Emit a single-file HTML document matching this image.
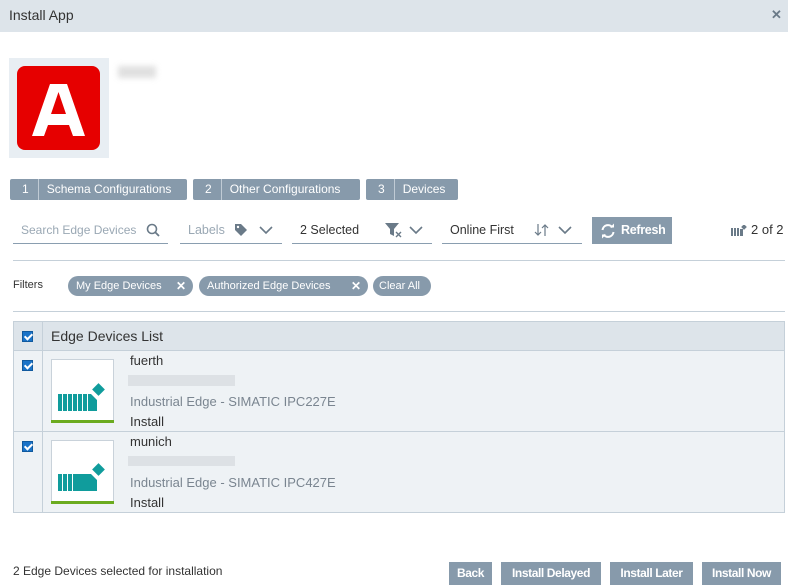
<!DOCTYPE html>
<html><head><style>
*{box-sizing:border-box;margin:0;padding:0}
body{width:788px;height:588px;background:#fff;font-family:"Liberation Sans",sans-serif;color:#333;position:relative;overflow:hidden;font-size:13px}
.a{position:absolute;white-space:nowrap}
.hdr{left:0;top:0;width:788px;height:32px;background:#dde4ea}
.step{top:179px;height:21px;background:#879aab;color:#fff;font-size:12px;line-height:21px;border-radius:2px;display:flex}
.step span.n{padding:0 9px 0 12px;border-right:1px solid #c0cbd5}
.step span.t{padding:0 8px}
.ul{border-bottom:1px solid #8a9eb0;height:27px;top:217px;font-size:12.5px;line-height:27px}
.chip{top:276px;height:20px;background:#879aab;color:#fff;border-radius:10px;font-size:11px;line-height:20px;padding:0 8px}
.chip b{position:absolute;right:7px;top:0;font-size:12px}
.btn{top:562px;height:23px;background:#879aab;color:#fff;font-weight:bold;font-size:12px;line-height:23px;text-align:center;letter-spacing:-0.4px}
.cb{width:11px;height:11px;background:#1a73c8;border:1px solid #10599e}
.cb:after{content:"";position:absolute;left:3px;top:0px;width:3px;height:6px;border:solid #fff;border-width:0 2px 2px 0;transform:rotate(45deg)}
.img{width:63px;height:64px;background:#fff;border:1px solid #c9d2da;border-bottom:none}
</style></head><body>
<div class="a hdr"></div>
<div class="a" style="left:9px;top:7px;font-size:14px;color:#333">Install App</div>
<div class="a" style="left:771px;top:7px;font-size:13px;font-weight:bold;color:#6a7a88">✕</div>

<div class="a" style="left:9px;top:58px;width:100px;height:100px;background:#e8eef3"></div>
<div class="a" style="left:17px;top:66px;width:83px;height:84px;background:#e60000;border-radius:8px"></div>
<svg class="a" style="left:17px;top:66px" width="83" height="84"><path d="M33 18 H50 L68 70 H56 L52 59 H31 L27 70 H15 Z M34 48 H49 L41.5 26 Z" fill="#fff" fill-rule="evenodd"/></svg>
<div class="a" style="left:118px;top:66px;width:38px;height:12px;background:#d8d8d8;filter:blur(3px);opacity:.8"></div>

<div class="a step" style="left:10px;width:177px"><span class="n">1</span><span class="t">Schema Configurations</span></div>
<div class="a step" style="left:193px;width:167px"><span class="n">2</span><span class="t">Other Configurations</span></div>
<div class="a step" style="left:366px;width:92px"><span class="n">3</span><span class="t">Devices</span></div>

<div class="a ul" style="left:13px;width:155px;color:#9aa8b4;padding-left:8px;font-size:12px">Search Edge Devices</div>
<svg class="a" style="left:146px;top:223px" width="14" height="14"><circle cx="6" cy="6" r="4.5" stroke="#6a7a88" stroke-width="1.6" fill="none"/><path d="M9.5 9.5 L13 13" stroke="#6a7a88" stroke-width="1.8"/></svg>
<div class="a ul" style="left:180px;width:102px;color:#9aa8b4;padding-left:8px">Labels</div>
<svg class="a" style="left:234px;top:223px" width="14" height="14"><path d="M1 1 H7 L13 7 L7 13 L1 7 Z" fill="#6a7a88"/><circle cx="4" cy="4" r="1.2" fill="#fff"/></svg>
<svg class="a" style="left:259px;top:225px" width="14" height="10"><path d="M1 2 L7 8 L13 2" stroke="#6a7a88" stroke-width="1.6" fill="none"/></svg>
<div class="a ul" style="left:292px;width:140px;color:#333;padding-left:8px">2 Selected</div>
<svg class="a" style="left:384px;top:222px" width="20" height="16"><path d="M1 1 H15 L10 7 V14 L6 12 V7 Z" fill="#6a7a88"/><path d="M12 10 L17 15 M17 10 L12 15" stroke="#6a7a88" stroke-width="1.4"/></svg>
<svg class="a" style="left:409px;top:225px" width="14" height="10"><path d="M1 2 L7 8 L13 2" stroke="#6a7a88" stroke-width="1.6" fill="none"/></svg>
<div class="a ul" style="left:442px;width:140px;color:#333;padding-left:8px">Online First</div>
<svg class="a" style="left:534px;top:223px" width="16" height="14"><path d="M4 1 V12 M1 9 L4 12 L7 9 M11 13 V2 M8 5 L11 2 L14 5" stroke="#6a7a88" stroke-width="1.2" fill="none"/></svg>
<svg class="a" style="left:558px;top:225px" width="14" height="10"><path d="M1 2 L7 8 L13 2" stroke="#6a7a88" stroke-width="1.6" fill="none"/></svg>
<div class="a" style="left:592px;top:217px;width:80px;height:27px;background:#879aab;color:#fff;font-weight:bold;font-size:12.5px;line-height:27px;padding-left:29px;letter-spacing:-0.3px">Refresh</div>
<svg class="a" style="left:600px;top:223px" width="16" height="16"><path d="M2.5 7 A5.5 5.5 0 0 1 12.5 4.5 M13.5 9 A5.5 5.5 0 0 1 3.5 11.5" stroke="#fff" stroke-width="2" fill="none"/><path d="M10 4.5 H14 V0.5 Z M6 11.5 H2 V15.5 Z" fill="#fff"/></svg>
<svg class="a" style="left:731px;top:225px" width="16" height="12"><rect x="0" y="3" width="2" height="8" fill="#6a7a88"/><rect x="3" y="3" width="2" height="8" fill="#6a7a88"/><rect x="6" y="3" width="2" height="8" fill="#6a7a88"/><path d="M9 4 H12 V11 H9Z" fill="#6a7a88"/><rect x="11" y="0" width="4" height="4" transform="rotate(45 13 2)" fill="#6a7a88"/></svg>
<div class="a" style="left:751px;top:222px;font-size:13px;color:#333">2 of 2</div>

<div class="a" style="left:13px;top:260px;width:772px;height:1px;background:#c5d0d9"></div>
<div class="a" style="left:13px;top:279px;font-size:11px;color:#333">Filters</div>
<div class="a chip" style="left:68px;width:125px">My Edge Devices<b>✕</b></div>
<div class="a chip" style="left:199px;width:169px">Authorized Edge Devices<b>✕</b></div>
<div class="a chip" style="left:373px;width:58px;padding:0 6px">Clear All</div>
<div class="a" style="left:13px;top:311px;width:772px;height:1px;background:#c5d0d9"></div>

<div class="a" style="left:13px;top:321px;width:772px;height:192px;background:#eef2f5;border:1px solid #c5d0d9"></div>
<div class="a" style="left:14px;top:322px;width:770px;height:29px;background:#dde4ea;border-bottom:1px solid #c5d0d9"></div>
<div class="a" style="left:42px;top:322px;width:1px;height:190px;background:#c5d0d9"></div>
<div class="a" style="left:14px;top:431px;width:770px;height:1px;background:#c5d0d9"></div>
<div class="a cb" style="left:22px;top:331px"></div>
<div class="a" style="left:51px;top:328px;font-size:14px;color:#333">Edge Devices List</div>

<div class="a cb" style="left:22px;top:360px"></div>
<div class="a img" style="left:51px;top:359px"></div>
<div class="a" style="left:51px;top:420px;width:63px;height:3px;background:#6bab1f"></div>
<svg class="a" style="left:57px;top:383px" width="52" height="30"><g fill="#109c9c"><rect x="1" y="11" width="4" height="17"/><rect x="6" y="11" width="4" height="17"/><rect x="11" y="11" width="4" height="17"/><rect x="16" y="11" width="4" height="17"/><rect x="21" y="11" width="4" height="17"/><rect x="26" y="11" width="4" height="17"/><path d="M31 11 H34 L40 17 V28 H31Z"/><rect x="37" y="2" width="9" height="9" transform="rotate(45 41.5 6.5)"/></g></svg>
<div class="a" style="left:130px;top:353px;font-size:13px;color:#333">fuerth</div>
<div class="a" style="left:128px;top:375px;width:107px;height:11px;background:#dde1e5"></div>
<div class="a" style="left:130px;top:394px;font-size:13px;color:#7a8590">Industrial Edge - SIMATIC IPC227E</div>
<div class="a" style="left:130px;top:414px;font-size:13px;color:#333">Install</div>

<div class="a cb" style="left:22px;top:441px"></div>
<div class="a img" style="left:51px;top:440px"></div>
<div class="a" style="left:51px;top:501px;width:63px;height:3px;background:#6bab1f"></div>
<svg class="a" style="left:57px;top:463px" width="52" height="30"><g fill="#109c9c"><rect x="1" y="11" width="4" height="17"/><rect x="6" y="11" width="4" height="17"/><rect x="11" y="11" width="4" height="17"/><path d="M16 11 H34 L40 17 V28 H16Z"/><rect x="37" y="2" width="9" height="9" transform="rotate(45 41.5 6.5)"/></g></svg>
<div class="a" style="left:130px;top:434px;font-size:13px;color:#333">munich</div>
<div class="a" style="left:128px;top:456px;width:107px;height:10px;background:#dde1e5"></div>
<div class="a" style="left:130px;top:475px;font-size:13px;color:#7a8590">Industrial Edge - SIMATIC IPC427E</div>
<div class="a" style="left:130px;top:495px;font-size:13px;color:#333">Install</div>

<div class="a" style="left:13px;top:564px;font-size:12px;color:#333">2 Edge Devices selected for installation</div>
<div class="a btn" style="left:449px;width:43px">Back</div>
<div class="a btn" style="left:501px;width:100px">Install Delayed</div>
<div class="a btn" style="left:610px;width:83px">Install Later</div>
<div class="a btn" style="left:702px;width:79px">Install Now</div>
</body></html>
